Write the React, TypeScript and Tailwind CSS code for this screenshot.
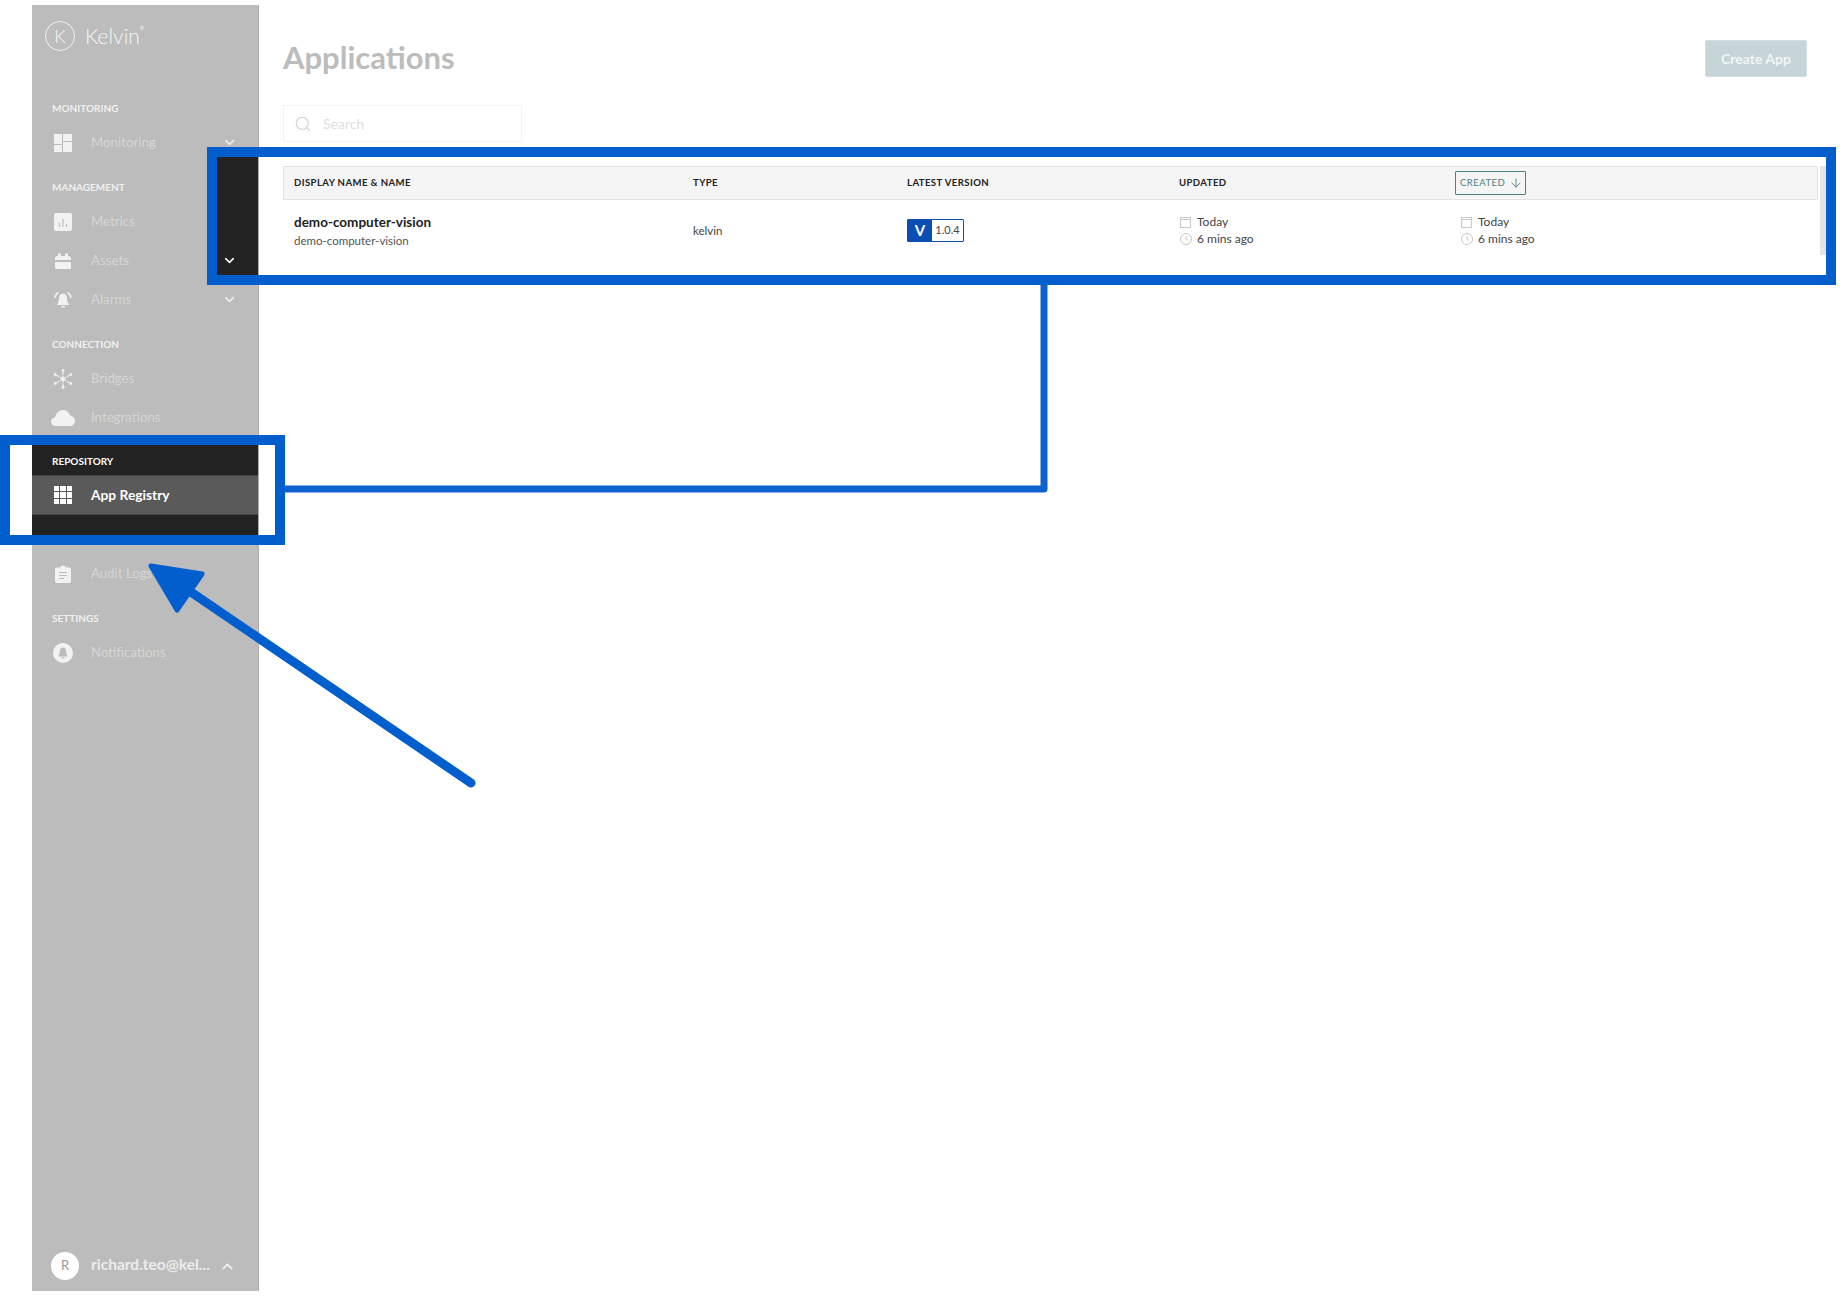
import { ArrowDown, ChevronDown, ChevronUp, Search } from "lucide-react";
import type { ReactNode } from "react";

const font = "font-['Lato','Open_Sans',sans-serif]";

function DashboardIcon() {
  return (
    <svg width="18" height="18" viewBox="0 0 18 18" fill="#f2f2f2">
      <rect x="0" y="0" width="8" height="10" />
      <rect x="0" y="11" width="8" height="7" />
      <rect x="9" y="0" width="9" height="7" />
      <rect x="9" y="8" width="9" height="10" />
    </svg>
  );
}

function MetricsIcon() {
  return (
    <svg width="18" height="18" viewBox="0 0 18 18">
      <rect width="18" height="18" rx="2" fill="#f2f2f2" />
      <path d="M5.5 10v4M9 6v8M12.5 11v3" stroke="#bbbcbb" strokeWidth="1.2" />
    </svg>
  );
}

function AssetsIcon() {
  return (
    <svg width="18" height="18" viewBox="0 0 18 18" fill="#f2f2f2">
      <path d="M1 6.5C1 5 2 4 3.5 4H4V1.5h3V4h4V1.5h3V4h.5C16 4 17 5 17 6.5V8H1z" />
      <path d="M1 10h16v5.500c0 1-.8 1.500-1.500 1.500h-13C1.800 17 1 16.500 1 15.500z" />
    </svg>
  );
}

function AlarmIcon() {
  return (
    <svg width="18" height="18" viewBox="0 0 18 18" fill="#f2f2f2">
      <path d="M9 2.500c-2.800 0-4 2.200-4 5 0 3-1 4.500-2 6v.5h12v-.5c-1-1.500-2-3-2-6 0-2.800-1.200-5-4-5z" />
      <rect x="7" y="15" width="4" height="1.500" rx=".7" />
      <path d="M4.500 1.500C2.500 2.500 1.200 4.500 1 7M13.500 1.500c2 1 3.300 3 3.500 5.500" fill="none" stroke="#f2f2f2" strokeWidth="1.400" />
    </svg>
  );
}

function BridgesIcon() {
  return (
    <svg width="20" height="20" viewBox="0 0 20 20" fill="#f2f2f2">
      <path d="M10 2.500v15M3.500 6.200l13 7.600M16.500 6.200l-13 7.600" stroke="#f2f2f2" strokeWidth="1.300" strokeDasharray="3 1" />
      <circle cx="10" cy="1.500" r="1.400" />
      <circle cx="10" cy="18.500" r="1.400" />
      <circle cx="2.200" cy="5.500" r="1.400" />
      <circle cx="17.800" cy="5.500" r="1.400" />
      <circle cx="2.200" cy="14.500" r="1.400" />
      <circle cx="17.800" cy="14.500" r="1.400" />
      <circle cx="10" cy="10" r="2" />
    </svg>
  );
}

function CloudIcon() {
  return (
    <svg width="24" height="16" viewBox="0 0 24 16" fill="#f2f2f2">
      <path d="M4.500 16C2 16 0 14.200 0 11.800c0-2.200 1.700-4 4-4.200C5 3.200 8.200 0 12 0c3.300 0 6 2.200 7 5.400 2.800.4 5 2.700 5 5.500 0 2.800-2.300 5.100-5 5.100z" />
    </svg>
  );
}

function GridIcon() {
  const cells = [0, 1, 2, 3, 4, 5, 6, 7, 8];
  return (
    <div className="grid h-[18px] w-[18px] grid-cols-3 gap-[1px]">
      {cells.map((c) => (
        <div key={c} className="bg-white" />
      ))}
    </div>
  );
}

function AuditIcon() {
  return (
    <svg width="16" height="18" viewBox="0 0 16 18">
      <path d="M2 2.500h3.200C5.500 1.200 6.600.500 8 .500s2.500.7 2.800 2H14c1.100 0 2 .8 2 1.800v11.900c0 1-.9 1.800-2 1.800H2c-1.100 0-2-.8-2-1.800V4.300c0-1 .9-1.800 2-1.800z" fill="#f2f2f2" />
      <path d="M4 7.500h8M4 10.500h8M4 13.500h5" stroke="#bbbcbb" strokeWidth="1.200" />
    </svg>
  );
}

function BellCircleIcon() {
  return (
    <svg width="20" height="20" viewBox="0 0 20 20">
      <circle cx="10" cy="10" r="10" fill="#f2f2f2" />
      <path d="M10 4.500c-2.300 0-3.200 1.800-3.200 4 0 2.200-.6 3.300-1.300 4.300v.7h9v-.7c-.7-1-1.300-2.100-1.300-4.300 0-2.200-.9-4-3.200-4z" fill="#bbbcbb" />
      <rect x="8.500" y="14.300" width="3" height="1.300" rx=".6" fill="#bbbcbb" />
    </svg>
  );
}

function SectionLabel({ children }: { children: ReactNode }) {
  return <div className="mb-[6px] flex h-[18px] items-center pl-5 text-[10px] font-bold text-[#f0f0f0]">{children}</div>;
}

function NavRow({ icon, label, chevron }: { icon: ReactNode; label: string; chevron?: boolean }) {
  return (
    <div className="flex h-[39px] items-center text-[13.250px] text-[#d6d6d6]">
      <div className="flex w-[59px] shrink-0 items-center justify-center pl-[3px]">{icon}</div>
      <span>{label}</span>
      {chevron && <ChevronDown size={15} strokeWidth={2.500} className="ml-auto mr-[21px] text-[#eeeeee]" />}
    </div>
  );
}

function Sidebar() {
  return (
    <aside className="relative flex h-[1286px] w-[227px] shrink-0 flex-col border-r border-[#adadad] bg-[#bbbcbb]">
      {/* Logo */}
      <div className="flex h-[94px] items-start pl-[13px] pt-[16px]">
        <div className="flex h-[30px] w-[30px] items-center justify-center rounded-full border border-[#f2f2f2] text-[18px] font-light leading-none text-[#f5f5f5]">
          K
        </div>
        <span className="ml-[10px] mt-[1px] text-[21px] font-light leading-[28px] text-[#f5f5f5]">Kelvin</span>
        <span className="mt-[5px] text-[5px] leading-none text-[#f5f5f5]">®</span>
      </div>

      <SectionLabel>MONITORING</SectionLabel>
      <NavRow icon={<DashboardIcon />} label="Monitoring" chevron />

      <div className="mt-4">
        <SectionLabel>MANAGEMENT</SectionLabel>
        <NavRow icon={<MetricsIcon />} label="Metrics" />
        <NavRow icon={<AssetsIcon />} label="Assets" />
        <NavRow icon={<AlarmIcon />} label="Alarms" chevron />
      </div>

      <div className="mt-4">
        <SectionLabel>CONNECTION</SectionLabel>
        <NavRow icon={<BridgesIcon />} label="Bridges" />
        <NavRow icon={<CloudIcon />} label="Integrations" />
      </div>

      {/* highlighted section */}
      <div className="mt-2 bg-[#222322] pb-5 pt-[7px]">
        <div className="mb-[5px] flex h-[18px] items-center pl-5 text-[10px] font-bold text-white">REPOSITORY</div>
        <div className="flex h-10 items-center border-y border-[#444] bg-[#5a5a5a] text-[13.750px] font-bold text-white">
          <div className="flex w-[59px] shrink-0 items-center justify-center pl-[3px]">
            <GridIcon />
          </div>
          <span>App Registry</span>
        </div>
      </div>

      <div className="mt-[19px]">
        <NavRow icon={<AuditIcon />} label="Audit Logs" />
      </div>

      <div className="mt-4">
        <SectionLabel>SETTINGS</SectionLabel>
        <NavRow icon={<BellCircleIcon />} label="Notifications" />
      </div>

      {/* User */}
      <div className="mt-auto flex h-[50px] items-center pl-[19px]">
        <div className="flex h-7 w-7 items-center justify-center rounded-full bg-white text-[13px] text-[#999]">R</div>
        <span className="ml-[12px] w-[120px] whitespace-nowrap pb-[2px] text-[15.500px] font-bold text-[#ececec]">richard.teo@kel...</span>
        <ChevronUp size={17} strokeWidth={2.500} className="ml-[8px] text-[#f0f0f0]" />
      </div>

      {/* un-dimmed patch of the callout */}
      <div className="absolute left-[185px] top-[152px] flex h-[118px] w-[41px] items-end justify-start bg-[#222322] pb-[7px] pl-[5px]">
        <ChevronDown size={15} strokeWidth={2.500} className="text-white" />
      </div>
    </aside>
  );
}

function TimeCell() {
  return (
    <div className="flex flex-col gap-[3px] pl-[1px] text-[12px] leading-[14px] text-[#444]">
      <div className="flex items-center gap-[6px]">
        <svg width="11" height="12" viewBox="0 0 11 12" fill="none" stroke="#c8c8c8">
          <rect x=".5" y="1.500" width="10" height="10" />
          <path d="M.5 3.500h10" />
        </svg>
        Today
      </div>
      <div className="flex items-center gap-[5px]">
        <svg width="12" height="12" viewBox="0 0 12 12" fill="none" stroke="#c8c8c8">
          <circle cx="6" cy="6" r="5.500" />
          <path d="M6 3v3.200l2 1.300" />
        </svg>
        6 mins ago
      </div>
    </div>
  );
}

const columns = "grid grid-cols-[399px_214px_272px_276px_1fr]";

function AppTable() {
  return (
    <div className="relative mt-[24px]">
      <div className={`${columns} h-[34px] items-center rounded-[1px] border border-[#e2e2e2] bg-[#f5f5f5] pl-[10px] text-[9.600px] font-bold tracking-[0.4px] text-[#222]`}>
        <div>DISPLAY NAME &amp; NAME</div>
        <div>TYPE</div>
        <div>LATEST VERSION</div>
        <div>UPDATED</div>
        <div>
          <div className="flex h-6 w-[71px] items-center gap-[4px] rounded-[1px] border border-[#4e7f85] pl-[4px] font-normal text-[#4e7f85]">
            CREATED
            <ArrowDown size={14} strokeWidth={1.500} />
          </div>
        </div>
      </div>
      <div className={`${columns} h-[61px] items-center pl-[11px] pr-[10px]`}>
        <div>
          <div className="text-[13.500px] font-bold leading-[18px] text-[#222]">demo-computer-vision</div>
          <div className="mt-[3px] text-[11.500px] leading-[14px] text-[#555]">demo-computer-vision</div>
        </div>
        <div className="text-[11.500px] text-[#444]">kelvin</div>
        <div className="flex h-[23px] w-[57px] overflow-hidden rounded-[1px] border border-[#0b4fb5]">
          <div className="flex w-[24px] items-center justify-center bg-[#0b4fb5] text-[15px] font-bold text-white">V</div>
          <div className="flex flex-1 items-center justify-center text-[11px] text-[#444]">1.0.4</div>
        </div>
        <TimeCell />
        <div className="pl-[5px]">
          <TimeCell />
        </div>
      </div>
      {/* scrollbar */}
      <div className="absolute left-[1537px] top-0 h-[89px] w-[6px] bg-[#e4e4e4]" />
    </div>
  );
}

export default function App() {
  return (
    <div className={`${font} relative h-[1312px] w-[1848px] overflow-hidden bg-white`}>
      <div className="flex h-full pl-8 pt-[5px]">
        <Sidebar />
        <main className="min-w-0 flex-1 pl-[24px] pr-[30px] pt-[35px]">
          <div className="flex h-[37px] items-center justify-between pr-[11px]">
            <h1 className="pb-[2px] text-[31px] font-bold text-[#bcbcbc]">Applications</h1>
            <button className="h-[37px] w-[102px] rounded-[2px] border border-[#cfdfe2] bg-[#c5d5d8] text-[14px] font-bold text-[#f2f6f6]">
              Create App
            </button>
          </div>
          <div className="mt-[28px] flex h-[37px] w-[239px] items-center rounded-[1px] border border-[#f3f3f3] pl-[10px]">
            <Search size={18} strokeWidth={1.500} className="text-[#d4d4d4]" />
            <span className="ml-[11px] text-[14px] text-[#e0e0e0]">Search</span>
          </div>
          <AppTable />
        </main>
      </div>

      {/* callouts drawn over the screenshot */}
      <div className="absolute left-[207px] top-[147px] h-[138px] w-[1629px] border-[10px] border-[#015ecd]" />
      <div className="absolute left-0 top-[435px] h-[110px] w-[285px] border-[10px] border-[#015ecd]" />
      <svg className="absolute left-0 top-0" width="1848" height="1312" fill="none">
        <path d="M285 489H1044V285" stroke="#0d62cf" strokeWidth="7" strokeLinejoin="round" />
        <path d="M471 783L185 588" stroke="#015ecd" strokeWidth="9" strokeLinecap="round" />
        <path d="M151 566L202 574L177 610Z" fill="#015ecd" stroke="#015ecd" strokeWidth="5" strokeLinejoin="round" />
      </svg>
    </div>
  );
}
